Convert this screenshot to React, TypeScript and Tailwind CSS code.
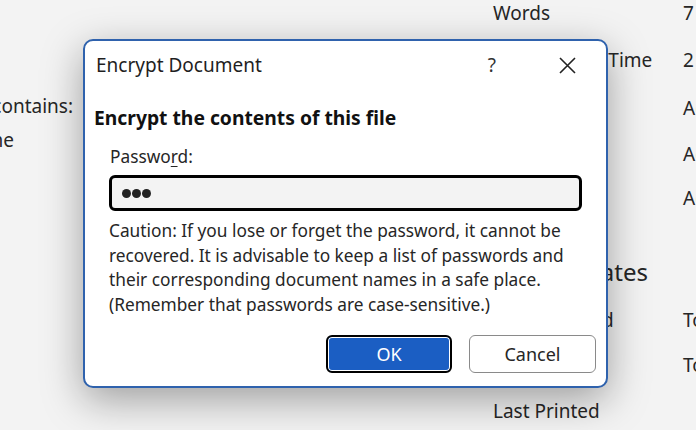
import React from "react";

const font = { fontFamily: '"Noto Sans", "Open Sans", sans-serif' };

function PropRow({ label, value, h }: { label: string; value: string; h: string }) {
  return (
    <div className={"flex items-center " + h}>
      <div className="w-[190px] shrink-0 whitespace-nowrap">{label}</div>
      <div className="whitespace-nowrap">{value}</div>
    </div>
  );
}

export default function App() {
  return (
    <div
      className="relative h-[430px] w-[696px] overflow-hidden bg-[#f3f3f3] text-[19px] text-[#262626]"
      style={font}
    >
      {/* Background page */}
      <div className="flex h-full">
        <div className="flex w-[73px] shrink-0 flex-col pt-[90px]">
          <div className="flex h-[32px] items-center justify-end overflow-hidden whitespace-nowrap">
            be aware that it contains:
          </div>
          <div className="flex h-[36px] items-center justify-end overflow-hidden whitespace-nowrap pr-[59px]">
            author's name
          </div>
        </div>
        <div className="ml-[420px] flex flex-col">
          <div className="-mt-[10px]">
            <PropRow label="Words" value="7" h="h-[46px]" />
            <PropRow label="Total Editing Time" value="2 Minutes" h="h-[48px]" />
            <PropRow label="Title" value="Add a title" h="h-[48px]" />
            <PropRow label="Tags" value="Add a tag" h="h-[44px]" />
            <PropRow label="Comments" value="Add comments" h="h-[45px]" />
          </div>
          <div className="-ml-[1px] mt-[35px] whitespace-nowrap text-[24px] leading-[32px]">
            Related Dates
          </div>
          <div className="mt-[11px]">
            <PropRow label="Last Modified" value="Today, 10:21 AM" h="h-[43px]" />
            <PropRow label="Created" value="Today, 10:01 AM" h="h-[47px]" />
            <PropRow label="Last Printed" value="" h="h-[45px]" />
          </div>
        </div>
      </div>

      {/* Dialog */}
      <div className="absolute left-[83px] top-[39px] flex h-[349px] w-[525px] flex-col rounded-[10px] border-2 border-[#2f62ad] bg-white shadow-[0_12px_40px_rgba(0,0,0,0.35)]">
        <div className="flex h-[48px] items-center pl-[11px] pr-[30px]">
          <div className="flex-1 text-[19px] text-[#1f1f1f]">Encrypt Document</div>
          <div className="mr-[63px] text-[19px] text-[#333]">?</div>
          <svg width="17" height="17" viewBox="0 0 17 17" className="text-[#222]">
            <path d="M1 1 L16 16 M16 1 L1 16" stroke="currentColor" strokeWidth="1.6" fill="none" />
          </svg>
        </div>
        <div className="pl-[9px] pt-[16px] text-[19.3px] font-bold leading-[26px] text-[#111]">
          Encrypt the contents of this file
        </div>
        <div className="pl-[25px] pt-[14px] text-[17.3px] leading-[24px] text-[#262626]">
          Passwo<span className="underline underline-offset-[3px]">r</span>d:
        </div>
        <div className="ml-[24px] mt-[6px] flex h-[36px] w-[473px] items-center gap-[1px] rounded-[6px] border-[3px] border-black bg-[#f3f3f3] pl-[10px]">
          <span className="h-[9px] w-[9px] rounded-full bg-[#222]" />
          <span className="h-[9px] w-[9px] rounded-full bg-[#222]" />
          <span className="h-[9px] w-[9px] rounded-full bg-[#222]" />
        </div>
        <div className="pl-[24px] pr-[10px] pt-[8px] text-[17.3px] leading-[24.5px] text-[#262626]">
          Caution: If you lose or forget the password, it cannot be
          <br />
          recovered. It is advisable to keep a list of passwords and
          <br />
          their corresponding document names in a safe place.
          <br />
          (Remember that passwords are case-sensitive.)
        </div>
        <div className="mt-auto flex justify-end gap-[17px] pb-[13px] pr-[10px]">
          <button className="h-[38px] w-[126px] rounded-[6px] border-2 border-black bg-[#1b5ec3] text-[18px] text-white shadow-[inset_0_0_0_1px_#ffffff]">
            OK
          </button>
          <button className="h-[38px] w-[127px] rounded-[6px] border border-[#8a8a8a] bg-white text-[18px] text-[#262626]">
            Cancel
          </button>
        </div>
      </div>
    </div>
  );
}
